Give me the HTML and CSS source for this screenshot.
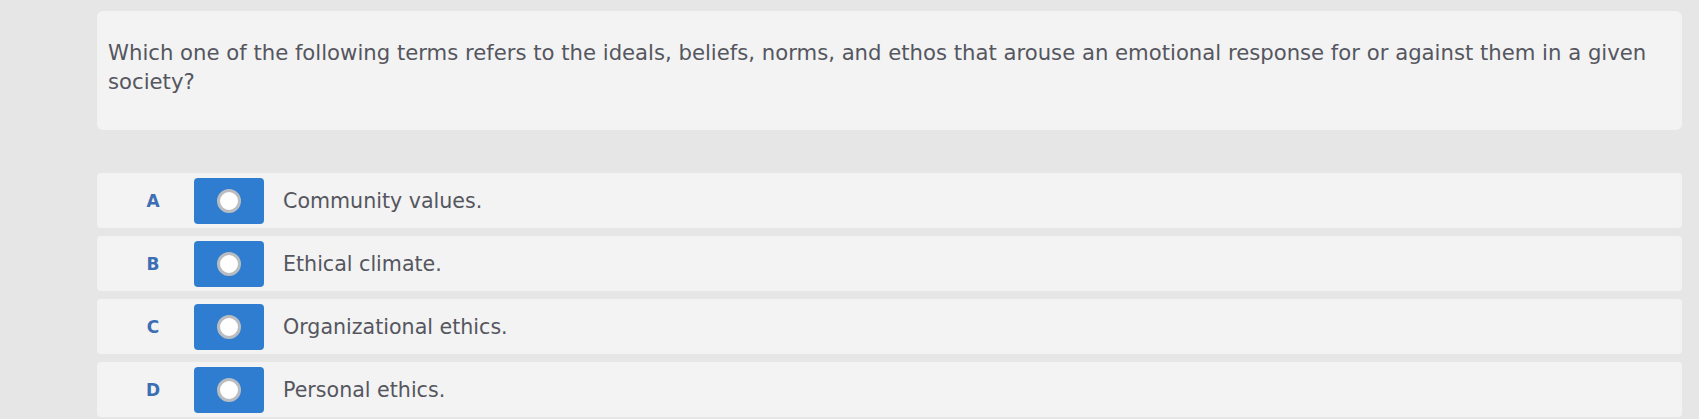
FILE: index.html
```html
<!DOCTYPE html>
<html lang="en">
<head>
<meta charset="utf-8">
<title>Question</title>
<link rel="stylesheet" href="styles.css">
</head>
<body>
<main class="page">
  <section class="question">
    <p class="question-text">Which one of the following terms refers to the ideals, beliefs, norms, and ethos that arouse an emotional response for or against them in a given society?</p>
  </section>
  <ul class="options">
    <li class="option">
      <span class="letter">A</span>
      <span class="radio-btn"><span class="dot"></span></span>
      <span class="label">Community values.</span>
    </li>
    <li class="option">
      <span class="letter">B</span>
      <span class="radio-btn"><span class="dot"></span></span>
      <span class="label">Ethical climate.</span>
    </li>
    <li class="option">
      <span class="letter">C</span>
      <span class="radio-btn"><span class="dot"></span></span>
      <span class="label">Organizational ethics.</span>
    </li>
    <li class="option">
      <span class="letter">D</span>
      <span class="radio-btn"><span class="dot"></span></span>
      <span class="label">Personal ethics.</span>
    </li>
  </ul>
</main>
</body>
</html>
```

FILE: styles.css
```css
html, body {
  margin: 0;
  padding: 0;
  background: #e5e6e5;
}

body {
  font-family: "DejaVu Sans", Verdana, sans-serif;
  color: #555660;
  height: 419px;
  overflow: hidden;
}

.page {
  padding: 11px 17px 0 97px;
}

.question {
  background: #f2f3f2;
  border-radius: 6px;
  padding: 27px 20px 34px 11px;
}

.question-text {
  margin: 0;
  font-size: 21.2px;
  line-height: 29px;
}

.options {
  list-style: none;
  margin: 43px 0 0 0;
  padding: 0;
  display: flex;
  flex-direction: column;
  gap: 8px;
}

.option {
  height: 55px;
  background: #f2f3f2;
  border-radius: 4px;
  display: flex;
  align-items: center;
}

.letter {
  width: 30px;
  margin-left: 41px;
  text-align: center;
  font-weight: bold;
  font-size: 17px;
  color: #3d6db3;
}

.radio-btn {
  width: 70px;
  height: 46px;
  margin-left: 26px;
  background: #2f7dd0;
  border-radius: 4px;
  display: flex;
  align-items: center;
  justify-content: center;
}

.dot {
  width: 18px;
  height: 18px;
  border-radius: 50%;
  background: #ffffff;
  border: 3px solid #b9bcc0;
}

.label {
  margin-left: 19px;
  font-size: 20.6px;
}
```
